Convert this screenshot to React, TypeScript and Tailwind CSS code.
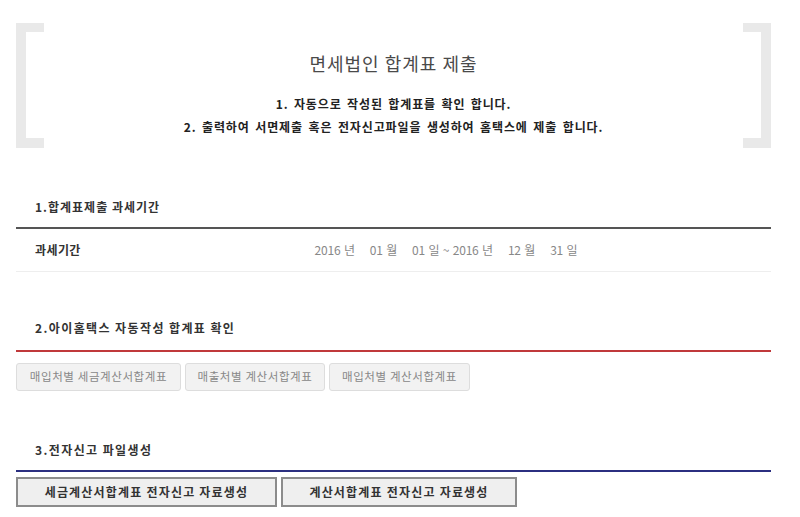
import React from "react";

const FONT = { fontFamily: '"Noto Sans CJK KR", "Noto Sans", sans-serif' };

function SectionHeading({ children, color, mt, pb, tracking }: { children: React.ReactNode; color: string; mt: string; pb: string; tracking: string }) {
  return (
    <div className={`${mt} ${pb} ${color} border-b-2 pl-[19px] text-[12px] leading-[16px] font-bold text-[#333] ${tracking}`}>
      {children}
    </div>
  );
}

export default function App() {
  return (
    <div className="w-[800px] h-[517px] bg-white overflow-hidden" style={FONT}>
      <div className="ml-[16px] w-[755px]">
        {/* Header */}
        <div className="flex h-[125px] mt-[23px]">
          <div className="w-[28px] border-l-[10px] border-t-[9px] border-b-[10px] border-[#e9e9e9]" />
          <div className="flex-1 flex flex-col items-center pt-[28px]">
            <div className="text-[18px] leading-[24px] text-[#4a4a4a] tracking-[1px]">면세법인 합계표 제출</div>
            <div className="mt-[17px] text-[12px] leading-[23px] font-bold text-[#222] tracking-[0.85px] [word-spacing:2px]">
              1. 자동으로 작성된 합계표를 확인 합니다.
            </div>
            <div className="text-[12px] leading-[23px] font-bold text-[#222] tracking-[0.87px] [word-spacing:2px]">
              2. 출력하여 서면제출 혹은 전자신고파일을 생성하여 홈택스에 제출 합니다.
            </div>
          </div>
          <div className="w-[28px] border-r-[10px] border-t-[9px] border-b-[10px] border-[#e9e9e9]" />
        </div>

        {/* Section 1 */}
        <SectionHeading color="border-[#555]" mt="mt-[51px]" pb="pb-[12px]" tracking="tracking-[1px]">
          1.합계표제출 과세기간
        </SectionHeading>
        <div className="flex items-center h-[43px] border-b border-[#eeeeee]">
          <div className="w-[105px] pl-[19px] text-[12px] font-bold text-[#333] tracking-[0.4px]">과세기간</div>
          <div className="flex-1 flex justify-center">
            <div className="flex items-center gap-[15px] text-[12px] text-[#888] tracking-[-0.2px] [word-spacing:1px]">
              <span>2016 년</span>
              <span>01 월</span>
              <span>01 일 ~ 2016 년</span>
              <span>12 월</span>
              <span>31 일</span>
            </div>
          </div>
        </div>

        {/* Section 2 */}
        <SectionHeading color="border-[#c0393b]" mt="mt-[48px]" pb="pb-[14px]" tracking="tracking-[1.4px]">
          2.아이홈택스 자동작성 합계표 확인
        </SectionHeading>
        <div className="flex gap-[4px] mt-[11px]">
          <button className="w-[165px] h-[28px] rounded-[3px] border border-[#dddddd] bg-[#f2f2f2] text-[11.5px] text-[#888] tracking-[0.6px]">
            매입처별 세금계산서합계표
          </button>
          <button className="w-[140px] h-[28px] rounded-[3px] border border-[#dddddd] bg-[#f2f2f2] text-[11.5px] text-[#888] tracking-[0.6px]">
            매출처별 계산서합계표
          </button>
          <button className="w-[141px] h-[28px] rounded-[3px] border border-[#dddddd] bg-[#f2f2f2] text-[11.5px] text-[#888] tracking-[0.6px]">
            매입처별 계산서합계표
          </button>
        </div>

        {/* Section 3 */}
        <SectionHeading color="border-[#2b2f80]" mt="mt-[51px]" pb="pb-[12px]" tracking="tracking-[1.4px]">
          3.전자신고 파일생성
        </SectionHeading>
        <div className="flex gap-[4px] mt-[5px]">
          <button className="w-[261px] h-[30px] border-2 border-[#8c8c8c] bg-[#efefef] text-[12px] font-bold text-[#333] tracking-[1.2px]">
            세금계산서합계표 전자신고 자료생성
          </button>
          <button className="w-[236px] h-[30px] border-2 border-[#8c8c8c] bg-[#efefef] text-[12px] font-bold text-[#333] tracking-[1.2px]">
            계산서합계표 전자신고 자료생성
          </button>
        </div>
      </div>
    </div>
  );
}
